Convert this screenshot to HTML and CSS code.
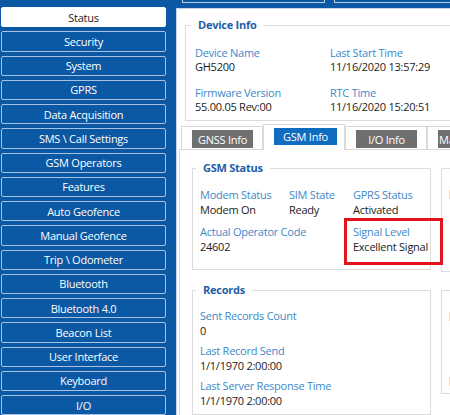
FILE: index.html
```html
<!DOCTYPE html>
<html lang="en">
<head>
    <meta charset="UTF-8">
    <meta name="viewport" content="width=device-width, initial-scale=1.0">
    <title>Status</title>
    <link rel="stylesheet" href="styles.css">
</head>
<body>
<div class="app">
    <div class="sidebar">
        <div class="nav-btn active">Status</div>
        <div class="nav-btn">Security</div>
        <div class="nav-btn">System</div>
        <div class="nav-btn">GPRS</div>
        <div class="nav-btn">Data Acquisition</div>
        <div class="nav-btn">SMS \ Call Settings</div>
        <div class="nav-btn">GSM Operators</div>
        <div class="nav-btn">Features</div>
        <div class="nav-btn">Auto Geofence</div>
        <div class="nav-btn">Manual Geofence</div>
        <div class="nav-btn">Trip \ Odometer</div>
        <div class="nav-btn">Bluetooth</div>
        <div class="nav-btn">Bluetooth 4.0</div>
        <div class="nav-btn">Beacon List</div>
        <div class="nav-btn">User Interface</div>
        <div class="nav-btn">Keyboard</div>
        <div class="nav-btn">I/O</div>
    </div>
    <div class="main">
        <div class="top-tabs">
            <div class="top-tab first"></div>
            <div class="top-tab"></div>
        </div>
        <div class="panel">
            <div class="group device">
                <div class="group-title">Device Info</div>
                <div class="device-grid">
                    <div class="field">
                        <div class="label">Device Name</div>
                        <div class="value">GH5200</div>
                    </div>
                    <div class="field">
                        <div class="label">Last Start Time</div>
                        <div class="value">11/16/2020 13:57:29</div>
                    </div>
                    <div class="field">
                        <div class="label">Firmware Version</div>
                        <div class="value">55.00.05 Rev:00</div>
                    </div>
                    <div class="field">
                        <div class="label">RTC Time</div>
                        <div class="value">11/16/2020 15:20:51</div>
                    </div>
                </div>
            </div>

            <div class="tabs">
                <div class="tab-head">
                    <div class="tab"><span class="tab-btn">GNSS Info</span></div>
                    <div class="tab selected"><span class="tab-btn">GSM Info</span></div>
                    <div class="tab"><span class="tab-btn">I/O Info</span></div>
                    <div class="tab"><span class="tab-btn">Ma</span></div>
                </div>
                <div class="tab-page">
                    <div class="col-left">
                        <div class="group gsm">
                            <div class="group-title">GSM Status</div>
                            <div class="gsm-grid">
                                <div class="field">
                                    <div class="label">Modem Status</div>
                                    <div class="value">Modem On</div>
                                </div>
                                <div class="field">
                                    <div class="label">SIM State</div>
                                    <div class="value">Ready</div>
                                </div>
                                <div class="field">
                                    <div class="label">GPRS Status</div>
                                    <div class="value">Activated</div>
                                </div>
                                <div class="field wide">
                                    <div class="label">Actual Operator Code</div>
                                    <div class="value">24602</div>
                                </div>
                                <div class="field highlight">
                                    <div class="label">Signal Level</div>
                                    <div class="value">Excellent Signal</div>
                                </div>
                            </div>
                        </div>
                        <div class="group records">
                            <div class="group-title">Records</div>
                            <div class="field">
                                <div class="label">Sent Records Count</div>
                                <div class="value">0</div>
                            </div>
                            <div class="field">
                                <div class="label">Last Record Send</div>
                                <div class="value">1/1/1970 2:00:00</div>
                            </div>
                            <div class="field">
                                <div class="label">Last Server Response Time</div>
                                <div class="value">1/1/1970 2:00:00</div>
                            </div>
                        </div>
                    </div>
                    <div class="col-right">
                        <div class="group side-a">
                            <div class="side-mark"></div>
                            <div class="side-line"></div>
                        </div>
                        <div class="group side-b">
                            <div class="side-mark"></div>
                            <div class="side-line"></div>
                            <div class="side-mark"></div>
                        </div>
                    </div>
                </div>
            </div>
        </div>
    </div>
</div>
</body>
</html>
```

FILE: styles.css
```css
*{
    box-sizing: border-box;
}
body{
    margin: 0;
    width: 450px;
    height: 415px;
    overflow: hidden;
    background: #0b58a4;
    font-family: "Open Sans", "Noto Sans", sans-serif;
    font-size: 11px;
    letter-spacing: -0.25px;
}
.app{
    display: flex;
    height: 415px;
}
.sidebar{
    width: 165px;
    margin-left: 1px;
    padding-top: 7px;
    display: flex;
    flex-direction: column;
    gap: 4px;
    flex-shrink: 0;
}
.nav-btn{
    height: 20.25px;
    border: 1px solid #a9c1e0;
    border-radius: 2px;
    color: #fff;
    display: flex;
    align-items: center;
    justify-content: center;
    flex-shrink: 0;
}
.nav-btn.active{
    background: #fff;
    border-color: #fff;
    color: #1a1a1a;
}
.main{
    flex: 1;
    margin-left: 10px;
    display: flex;
    flex-direction: column;
    min-width: 0;
}
.top-tabs{
    height: 8px;
    display: flex;
    gap: 9px;
    padding-left: 6px;
}
.top-tab{
    width: 143px;
    height: 3px;
    border: 1px solid #b7cbe4;
    border-top: none;
    flex-shrink: 0;
}
.top-tab + .top-tab{
    width: 200px;
}
.panel{
    flex: 1;
    background: #fff;
    border-left: 1px solid #c6d4e6;
    border-top: 1px solid #c6d4e6;
    overflow: hidden;
}

/* group boxes */
.group{
    border: 1px solid #dcdcdc;
}
.group-title{
    width: max-content;
    margin: -8px 0 0 -4px;
    padding: 0 7px;
    background: #fff;
    line-height: 14px;
    font-weight: bold;
    color: #1d5ea6;
}
.label{
    color: #3d88c8;
    line-height: 14px;
    white-space: nowrap;
}
.value{
    color: #1c1c1c;
    line-height: 14px;
    white-space: nowrap;
}

.device{
    margin: 16px -30px 0 8px;
    padding: 0 0 6px 9px;
}
.device-grid{
    margin-top: 14px;
    display: grid;
    grid-template-columns: 135px 1fr;
    row-gap: 12px;
}

/* tabs */
.tabs{
    margin: 2px 0 0 2px;
}
.tab-head{
    display: flex;
    align-items: flex-end;
    padding-left: 2px;
    height: 26px;
}
.tab{
    width: 82px;
    height: 23px;
    border: 1px solid #d9d9d9;
    border-bottom: none;
    padding: 3px 0 1px 10px;
    background: #fff;
    flex-shrink: 0;
}
.tab.selected{
    height: 26px;
    padding: 3px 0 0 10px;
    position: relative;
    margin-bottom: -1px;
}
.tab-btn{
    display: flex;
    align-items: center;
    justify-content: center;
    width: 61px;
    height: 18px;
    background: #6f6f6f;
    color: #fff;
    white-space: nowrap;
}
.tab.selected .tab-btn{
    width: 63px;
    height: 17px;
    background: #0f6cc0;
}
.tab:last-child .tab-btn{
    justify-content: flex-start;
    padding-left: 1px;
}
.tab-page{
    border-top: 1px solid #d9d9d9;
    border-left: 1px solid #d9d9d9;
    padding: 18px 0 0 12px;
    display: flex;
    gap: 10px;
}
.col-left{
    width: 239px;
    flex-shrink: 0;
}
.col-right{
    width: 120px;
    flex-shrink: 0;
}
.gsm{
    height: 102px;
    padding: 0 0 0 7px;
}
.gsm-grid{
    margin-top: 13px;
    display: grid;
    grid-template-columns: 89px 64px 1fr;
    row-gap: 7px;
}
.gsm .value{
    line-height: 16px;
}
.gsm .wide{
    grid-column: span 2;
}
.highlight{
    position: relative;
}
.highlight::after{
    content: "";
    position: absolute;
    left: -9px;
    top: -7px;
    width: 93px;
    height: 41px;
    border: 3px solid #e3141b;
}
.records{
    margin-top: 20px;
    height: 125px;
    padding: 0 0 0 7px;
}
.records .field{
    margin-top: 6px;
}
.records .group-title + .field{
    margin-top: 12px;
}
.records .value{
    line-height: 15px;
}
.side-a{
    height: 104px;
    padding: 21px 0 0 7px;
}
.side-b{
    margin-top: 18px;
    height: 104px;
    padding: 21px 0 0 7px;
}
.side-mark{
    width: 4px;
    height: 9px;
    background: #f7dcc2;
}
.side-line{
    margin: 38px 0 0 2px;
    border-top: 2px solid #c8c8c8;
}
.side-b .side-line{
    margin-top: 44px;
}
.side-b .side-line + .side-mark{
    margin-top: 10px;
}
```
